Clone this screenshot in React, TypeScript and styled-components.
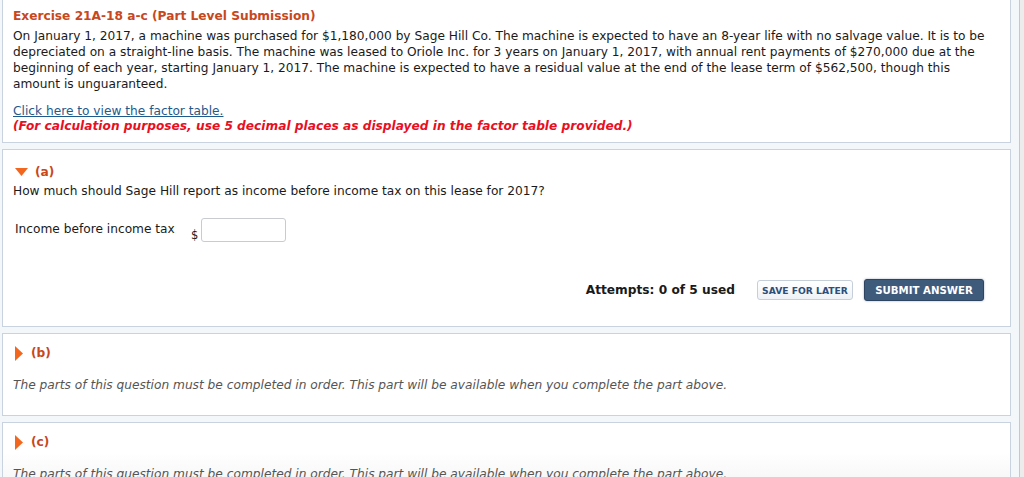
import React from "react";
import styled, { createGlobalStyle } from "styled-components";

const GlobalStyle = createGlobalStyle`
  html, body {
    margin: 0;
    padding: 0;
    background: #f3f7fa;
    font-family: "DejaVu Sans", Verdana, sans-serif;
    font-size: 12.2px;
    color: #1a1a1a;
    overflow: hidden;
  }
`;

function Arrow({ open }: { open?: boolean }) {
  return open ? (
    <svg width="13" height="9" viewBox="0 0 13 9">
      <polygon points="0,0 13,0 6.5,8" fill="#f2661e" />
    </svg>
  ) : (
    <svg width="9" height="15" viewBox="0 0 9 15">
      <polygon points="0,0 8,7.5 0,15" fill="#f2661e" />
    </svg>
  );
}

function App() {
  return (
    <>
      <GlobalStyle />
      <Page>
        <Main>
          <Panel $top>
            <Title>Exercise 21A-18 a-c (Part Level Submission)</Title>
            <Body>
              On January 1, 2017, a machine was purchased for $1,180,000 by Sage Hill Co. The machine is expected to
              have an 8-year life with no salvage value. It is to be depreciated on a straight-line basis. The machine
              was leased to Oriole Inc. for 3 years on January 1, 2017, with annual rent payments of $270,000 due at the
              beginning of each year, starting January 1, 2017. The machine is expected to have a residual value at the
              end of the lease term of $562,500, though this amount is unguaranteed.
            </Body>
            <Link href="#">Click here to view the factor table.</Link>
            <Warning>(For calculation purposes, use 5 decimal places as displayed in the factor table provided.)</Warning>
          </Panel>

          <Panel>
            <PartHead $open>
              <Arrow open />
              <PartLabel>(a)</PartLabel>
            </PartHead>
            <Question>How much should Sage Hill report as income before income tax on this lease for 2017?</Question>
            <AnswerRow>
              <AnswerLabel>Income before income tax</AnswerLabel>
              <Dollar>$</Dollar>
              <Input />
            </AnswerRow>
            <ActionRow>
              <Attempts>Attempts: 0 of 5 used</Attempts>
              <SaveButton>SAVE FOR LATER</SaveButton>
              <SubmitButton>SUBMIT ANSWER</SubmitButton>
            </ActionRow>
          </Panel>

          <Panel $short>
            <PartHead>
              <Arrow />
              <PartLabel>(b)</PartLabel>
            </PartHead>
            <Locked>The parts of this question must be completed in order. This part will be available when you complete the part above.</Locked>
          </Panel>

          <Panel $fade>
            <PartHead>
              <Arrow />
              <PartLabel>(c)</PartLabel>
            </PartHead>
            <Locked>The parts of this question must be completed in order. This part will be available when you complete the part above.</Locked>
          </Panel>
        </Main>
        <Scrollbar />
      </Page>
    </>
  );
}

const Page = styled.div`
  display: flex;
  height: 477px;
  overflow: hidden;
`;

const Main = styled.div`
  flex: 1;
  display: flex;
  flex-direction: column;
  gap: 6px;
  padding: 0 8px 0 2px;
`;

const Scrollbar = styled.div`
  width: 4px;
  border-left: 1px solid #c4c8cc;
  background: #ececec;
`;

const Panel = styled.div<{ $top?: boolean; $short?: boolean; $fade?: boolean }>`
  background: ${(p) => (p.$fade ? "linear-gradient(#ffffff 35%, #efefef)" : "#ffffff")};
  border: 1px solid #c9d3df;
  border-top: ${(p) => (p.$top ? "none" : "1px solid #c9d3df")};
  padding: ${(p) => (p.$top ? "8px 10px 8px 10px" : p.$short ? "9px 10px 22px 10px" : "9px 10px 25px 10px")};
  flex-shrink: 0;
`;

const Title = styled.div`
  color: #c8471c;
  font-weight: bold;
  line-height: 16px;
`;

const Body = styled.p`
  margin: 4px 0 0;
  line-height: 16px;
`;

const Link = styled.a`
  display: block;
  margin-top: 11px;
  color: #1f5a8c;
  line-height: 16px;
  text-decoration: underline;
`;

const Warning = styled.div`
  color: #e8101f;
  font-style: italic;
  font-weight: bold;
  line-height: 15px;
`;

const PartHead = styled.div<{ $open?: boolean }>`
  display: flex;
  align-items: center;
  gap: 7px;
  height: 20px;
  padding-left: 2px;
  margin-top: ${(p) => (p.$open ? "3px" : "0")};
  margin-bottom: ${(p) => (p.$open ? "1px" : "14px")};
`;

const PartLabel = styled.span`
  color: #c8471c;
  font-weight: bold;
`;

const Question = styled.div`
  line-height: 16px;
`;

const AnswerRow = styled.div`
  display: flex;
  align-items: flex-start;
  margin-top: 19px;
  padding-left: 2px;
`;

const AnswerLabel = styled.span`
  line-height: 16px;
  margin-top: 3px;
  width: 176px;
`;

const Dollar = styled.span`
  font-size: 11.5px;
  margin-top: 10px;
  line-height: 14px;
  width: 10px;
`;

const Input = styled.div`
  width: 83px;
  height: 22px;
  border: 1px solid #c8cbcf;
  border-radius: 3px;
  background: #fff;
`;

const ActionRow = styled.div`
  display: flex;
  justify-content: flex-end;
  align-items: center;
  margin-top: 37px;
  padding-right: 16px;
`;

const Attempts = styled.span`
  font-weight: bold;
  margin-right: 22px;
`;

const SaveButton = styled.button`
  font-family: "DejaVu Sans", Verdana, sans-serif;
  font-size: 9.2px;
  font-weight: bold;
  color: #2b4f7a;
  background: linear-gradient(#ffffff, #eef2f6);
  border: 1px solid #c6cfd9;
  border-radius: 3px;
  height: 20px;
  width: 96px;
  padding: 0;
  margin-right: 11px;
`;

const SubmitButton = styled.button`
  font-family: "DejaVu Sans", Verdana, sans-serif;
  font-size: 10.2px;
  font-weight: bold;
  color: #ffffff;
  background: #3f5b7c;
  border: 1px solid #2d4560;
  border-radius: 3px;
  height: 22px;
  width: 120px;
  padding: 0;
  box-shadow: 0 0 2px rgba(40, 70, 100, 0.5);
`;

const Locked = styled.div`
  font-style: italic;
  color: #555555;
  line-height: 16px;
`;

export default App;
